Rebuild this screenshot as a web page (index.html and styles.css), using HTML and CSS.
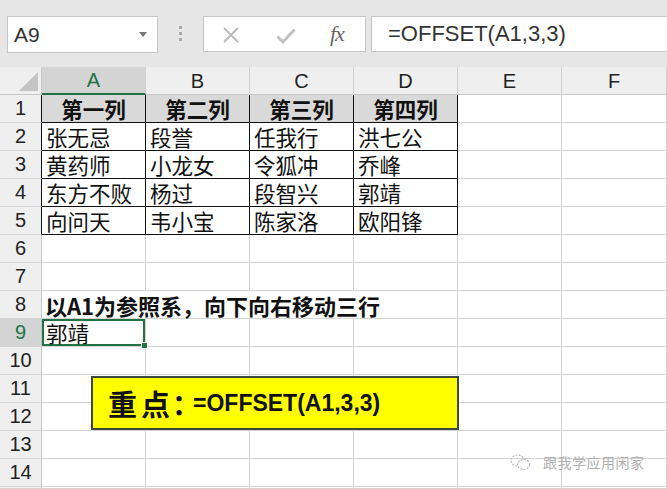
FILE: index.html
```html
<!DOCTYPE html>
<html lang="zh">
<head>
<meta charset="utf-8">
<link rel="stylesheet" href="styles.css">
</head>
<body>
<div class="toolbar">
  <div class="namebox"><span class="nb-text">A9</span><span class="nb-arrow"></span></div>
  <div class="grip"><i></i><i></i><i></i></div>
  <div class="fbtns">
    <svg class="ico-x" width="18" height="16" viewBox="0 0 18 16"><path d="M2 1 L16 15 M16 1 L2 15" stroke="#b9b9b9" stroke-width="1.8" fill="none"/></svg>
    <svg class="ico-ok" width="20" height="16" viewBox="0 0 20 16"><path d="M1.5 8.5 L7 14 L18.5 1.5" stroke="#c2c2c2" stroke-width="3" fill="none" stroke-linejoin="miter"/></svg>
    <span class="ico-fx">fx</span>
  </div>
  <div class="finput">=OFFSET(A1,3,3)</div>
</div>
<div class="sheet">
  <div class="corner"><span class="tri"></span></div>
  <div class="ch ch-sel">A</div><div class="ch">B</div><div class="ch">C</div><div class="ch">D</div><div class="ch">E</div><div class="ch">F</div>

  <div class="rh rh-t">1</div><div class="c t hd">第一列</div><div class="c t hd">第二列</div><div class="c t hd">第三列</div><div class="c t hd">第四列</div><div class="c"></div><div class="c"></div>
  <div class="rh rh-t">2</div><div class="c t">张无忌</div><div class="c t">段誉</div><div class="c t">任我行</div><div class="c t">洪七公</div><div class="c"></div><div class="c"></div>
  <div class="rh rh-t">3</div><div class="c t">黄药师</div><div class="c t">小龙女</div><div class="c t">令狐冲</div><div class="c t">乔峰</div><div class="c"></div><div class="c"></div>
  <div class="rh rh-t">4</div><div class="c t">东方不败</div><div class="c t">杨过</div><div class="c t">段智兴</div><div class="c t">郭靖</div><div class="c"></div><div class="c"></div>
  <div class="rh rh-t">5</div><div class="c t">向问天</div><div class="c t">韦小宝</div><div class="c t">陈家洛</div><div class="c t">欧阳锋</div><div class="c"></div><div class="c"></div>
  <div class="rh">6</div><div class="c"></div><div class="c"></div><div class="c"></div><div class="c"></div><div class="c"></div><div class="c"></div>
  <div class="rh">7</div><div class="c"></div><div class="c"></div><div class="c"></div><div class="c"></div><div class="c"></div><div class="c"></div>
  <div class="rh">8</div><div class="c span4 bold">以A1为参照系，向下向右移动三行</div><div class="c"></div><div class="c"></div>
  <div class="rh rh-sel">9</div><div class="c sel">郭靖<span class="handle"></span></div><div class="c"></div><div class="c"></div><div class="c"></div><div class="c"></div><div class="c"></div>
  <div class="rh">10</div><div class="c"></div><div class="c"></div><div class="c"></div><div class="c"></div><div class="c"></div><div class="c"></div>
  <div class="rh">11</div><div class="c"></div><div class="c"></div><div class="c"></div><div class="c"></div><div class="c"></div><div class="c"></div>
  <div class="rh">12</div><div class="c"></div><div class="c"></div><div class="c"></div><div class="c"></div><div class="c"></div><div class="c"></div>
  <div class="rh">13</div><div class="c"></div><div class="c"></div><div class="c"></div><div class="c"></div><div class="c"></div><div class="c"></div>
  <div class="rh">14</div><div class="c"></div><div class="c"></div><div class="c"></div><div class="c"></div><div class="c"></div><div class="c"></div>
  <div class="rh"></div><div class="c"></div><div class="c"></div><div class="c"></div><div class="c"></div><div class="c"></div><div class="c"></div>

  <div class="note"><span class="note-cjk">重点</span><span class="note-colon">：</span><span class="note-f">=OFFSET(A1,3,3)</span></div>

  <div class="wm">
    <svg width="21" height="17" viewBox="0 0 21 17"><g fill="none" stroke="#b8b8b8" stroke-width="1.2" stroke-dasharray="2 1.2"><ellipse cx="7.5" cy="6.5" rx="6.5" ry="5.5"/><ellipse cx="13.5" cy="10.5" rx="6" ry="5" fill="#fff"/></g></svg>
    <span class="wm-text">跟我学应用闲家</span>
  </div>
</div>
</body>
</html>
```

FILE: styles.css
```css
html, body {
  margin: 0;
  padding: 0;
  background: #fff;
  overflow: hidden;
}
body {
  width: 667px;
  height: 489px;
  font-family: "Noto Sans CJK SC", sans-serif;
}
.toolbar {
  height: 67px;
  box-sizing: border-box;
  background: #e6e6e6;
  display: flex;
  align-items: flex-start;
  padding: 16px 0 0 7px;
  overflow: hidden;
}
.namebox {
  width: 151px;
  height: 37px;
  box-sizing: border-box;
  background: #fff;
  border: 1px solid #c6c6c6;
  display: flex;
  align-items: center;
  justify-content: space-between;
  padding: 0 10px 0 6px;
  font-family: "Liberation Sans", sans-serif;
  font-size: 21px;
  color: #333;
}
.nb-arrow {
  width: 0;
  height: 0;
  border-left: 4px solid transparent;
  border-right: 4px solid transparent;
  border-top: 5px solid #777;
}
.grip {
  width: 4px;
  margin: 10px 20px 0 21px;
  display: flex;
  flex-direction: column;
  gap: 3px;
}
.grip i {
  display: block;
  width: 3px;
  height: 3px;
  background: #a9a9a9;
}
.fbtns {
  width: 163px;
  height: 36px;
  box-sizing: border-box;
  background: #fff;
  border: 1px solid #c6c6c6;
  display: flex;
  align-items: center;
  padding-left: 18px;
}
.ico-x { margin-top: 1px; }
.ico-ok { margin-left: 36px; margin-top: 3px; }
.ico-fx {
  margin-left: 34px;
  font-family: "Liberation Serif", serif;
  font-style: italic;
  font-size: 22px;
  color: #666;
  letter-spacing: -1px;
}
.finput {
  margin-left: 5px;
  flex: 1 0 auto;
  height: 36px;
  box-sizing: border-box;
  background: #fff;
  border: 1px solid #c6c6c6;
  border-right: none;
  display: flex;
  align-items: center;
  padding-left: 16px;
  font-family: "Liberation Sans", sans-serif;
  font-size: 22px;
  color: #333;
}
.sheet {
  position: relative;
  display: grid;
  grid-template-columns: 42px repeat(5, 104px) 1fr;
  grid-template-rows: 28px repeat(14, 28px) 2px;
  height: 422px;
  overflow: hidden;
}
.corner, .ch, .rh {
  background: #efefef;
  box-sizing: border-box;
  display: flex;
  align-items: center;
  justify-content: center;
  font-family: "Liberation Sans", sans-serif;
  font-size: 20px;
  color: #222;
}
.corner {
  border-right: 1px solid #c8c8c8;
  border-bottom: 1px solid #c8c8c8;
  position: relative;
}
.tri {
  position: absolute;
  right: 3px;
  bottom: 3px;
  width: 0;
  height: 0;
  border-left: 19px solid transparent;
  border-bottom: 19px solid #c4c4c4;
}
.ch {
  border-right: 1px solid #d0d0d0;
  border-bottom: 1px solid #c8c8c8;
  padding-top: 1px;
}
.ch-sel {
  background: #d4d4d4;
  border-bottom: 2px solid #217346;
  color: #217346;
}
.rh {
  border-right: 1px solid #c8c8c8;
  border-bottom: 1px solid #d4d4d4;
}
.rh-t { border-right-color: #111; }
.rh-sel {
  background: #d4d4d4;
  color: #217346;
}
.c {
  box-sizing: border-box;
  border-right: 1px solid #d4d4d4;
  border-bottom: 1px solid #d4d4d4;
  display: flex;
  align-items: center;
  padding-left: 4px;
  font-size: 21.5px;
  color: #111;
  white-space: nowrap;
  line-height: 1;
}
.c.t {
  border-right-color: #111;
  border-bottom-color: #111;
}
.c.hd {
  background: #d9d9d9;
  font-weight: bold;
  justify-content: center;
  padding-left: 0;
}
.span4 {
  grid-column: span 4;
}
.bold {
  font-weight: bold;
  font-size: 22px;
  padding-left: 3px;
}
.sel {
  position: relative;
  box-shadow: inset 0 0 0 2px #217346;
}
.handle {
  position: absolute;
  right: -3px;
  bottom: -3px;
  width: 5px;
  height: 5px;
  background: #217346;
  border: 1px solid #fff;
}
.note {
  position: absolute;
  left: 91px;
  top: 309px;
  width: 368px;
  height: 54px;
  box-sizing: border-box;
  background: #ffff00;
  border: 2px solid #3b4a3f;
  display: flex;
  align-items: center;
  padding-left: 15px;
  font-weight: bold;
  color: #111;
  white-space: nowrap;
}
.note-cjk {
  font-size: 29px;
  letter-spacing: 4px;
  line-height: 1;
}
.note-colon {
  display: inline-block;
  width: 21px;
  margin-left: -2px;
  font-size: 28px;
  line-height: 1;
}
.note-f {
  font-family: "Liberation Sans", sans-serif;
  font-size: 23px;
}
.wm {
  position: absolute;
  left: 510px;
  top: 385px;
  display: flex;
  align-items: center;
  gap: 12px;
}
.wm-text {
  font-size: 14px;
  color: #b0b0b0;
  letter-spacing: 0.5px;
}
```
